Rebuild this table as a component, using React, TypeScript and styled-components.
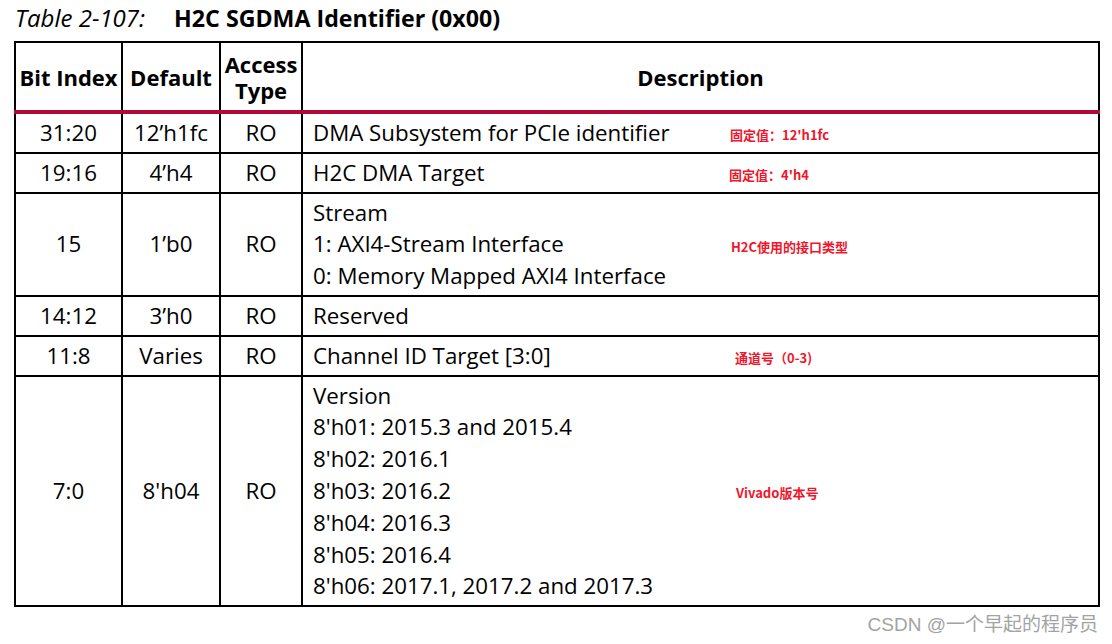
import React from "react";
import styled, { createGlobalStyle } from "styled-components";

const GlobalStyle = createGlobalStyle`
  html, body {
    margin: 0;
    padding: 0;
    background: #ffffff;
  }
  body {
    font-family: "Open Sans", "Noto Sans", sans-serif;
    color: #000;
  }
`;

const Page = styled.div`
  width: 1112px;
  height: 644px;
  box-sizing: border-box;
  padding: 3px 0 0 14px;
  overflow: hidden;
`;

const Caption = styled.div`
  display: flex;
  align-items: baseline;
  gap: 29px;
  height: 38px;
  padding-left: 1px;
  font-size: 23.2px;
  line-height: 30px;
`;

const CaptionLabel = styled.span`
  font-size: 24px;
  font-style: italic;
`;

const CaptionTitle = styled.span`
  font-weight: 700;
`;

const Table = styled.table`
  width: 1086px;
  table-layout: fixed;
  border-collapse: collapse;
  font-size: 22.3px;
`;

const HeadCell = styled.th`
  border: 2px solid #000;
  border-bottom: 4px solid #b20a38;
  height: 67px;
  padding: 0 2px;
  font-size: 22px;
  font-weight: 700;
  line-height: 30px;
  text-align: center;
  vertical-align: middle;
  white-space: nowrap;
`;

const HeadLine = styled.span`
  display: block;
  height: 26px;
  line-height: 26px;
`;

const Cell = styled.td<{ $align?: "left" | "center" }>`
  border: 2px solid #000;
  padding: 3px 10px;
  line-height: 31.8px;
  text-align: ${(p) => p.$align ?? "center"};
  vertical-align: middle;
  white-space: nowrap;
`;

const DescGrid = styled.div`
  display: grid;
  grid-template-columns: 416px 1fr;
  align-items: center;
`;

const Lines = styled.div`
  display: flex;
  flex-direction: column;
`;

const Note = styled.span<{ $shift?: number }>`
  padding-top: 5px;
  margin-left: ${(p) => p.$shift ?? 0}px;
  font-family: "Noto Sans CJK SC", sans-serif;
  font-size: 13px;
  font-weight: 700;
  line-height: 16px;
  color: #f0162c;
`;

const Watermark = styled.div`
  width: 1084px;
  margin-top: 6px;
  text-align: right;
  font-family: "Liberation Sans", "Noto Sans CJK SC", sans-serif;
  font-size: 19px;
  line-height: 24px;
  color: #a3a3a3;
`;

type Row = {
  bits: string;
  def: string;
  access: string;
  lines: string[];
  note?: string;
  shift?: number;
};

const rows: Row[] = [
  {
    bits: "31:20",
    def: "12\u2019h1fc",
    access: "RO",
    lines: ["DMA Subsystem for PCIe identifier"],
    note: "固定值：12'h1fc",
    shift: 1,
  },
  {
    bits: "19:16",
    def: "4\u2019h4",
    access: "RO",
    lines: ["H2C DMA Target"],
    note: "固定值：4'h4",
    shift: 0,
  },
  {
    bits: "15",
    def: "1\u2019b0",
    access: "RO",
    lines: [
      "Stream",
      "1: AXI4-Stream Interface",
      "0: Memory Mapped AXI4 Interface",
    ],
    note: "H2C使用的接口类型",
    shift: 2,
  },
  {
    bits: "14:12",
    def: "3\u2019h0",
    access: "RO",
    lines: ["Reserved"],
  },
  {
    bits: "11:8",
    def: "Varies",
    access: "RO",
    lines: ["Channel ID Target [3:0]"],
    note: "通道号（0-3)",
    shift: 6,
  },
  {
    bits: "7:0",
    def: "8'h04",
    access: "RO",
    lines: [
      "Version",
      "8'h01: 2015.3 and 2015.4",
      "8'h02: 2016.1",
      "8'h03: 2016.2",
      "8'h04: 2016.3",
      "8'h05: 2016.4",
      "8'h06: 2017.1, 2017.2 and 2017.3",
    ],
    note: "Vivado版本号",
    shift: 7,
  },
];

const App = () => {
  return (
    <Page>
      <GlobalStyle />
      <Caption>
        <CaptionLabel>Table 2-107:</CaptionLabel>
        <CaptionTitle>H2C SGDMA Identifier (0x00)</CaptionTitle>
      </Caption>
      <Table>
        <colgroup>
          <col style={{ width: 107 }} />
          <col style={{ width: 98 }} />
          <col style={{ width: 82 }} />
          <col />
        </colgroup>
        <thead>
          <tr>
            <HeadCell>Bit Index</HeadCell>
            <HeadCell>Default</HeadCell>
            <HeadCell>
              <HeadLine>Access</HeadLine>
              <HeadLine>Type</HeadLine>
            </HeadCell>
            <HeadCell>Description</HeadCell>
          </tr>
        </thead>
        <tbody>
          {rows.map((row) => (
            <tr key={row.bits}>
              <Cell>{row.bits}</Cell>
              <Cell>{row.def}</Cell>
              <Cell>{row.access}</Cell>
              <Cell $align="left">
                <DescGrid>
                  <Lines>
                    {row.lines.map((line) => (
                      <span key={line}>{line}</span>
                    ))}
                  </Lines>
                  {row.note && <Note $shift={row.shift}>{row.note}</Note>}
                </DescGrid>
              </Cell>
            </tr>
          ))}
        </tbody>
      </Table>
      <Watermark>CSDN @一个早起的程序员</Watermark>
    </Page>
  );
};

export default App;
